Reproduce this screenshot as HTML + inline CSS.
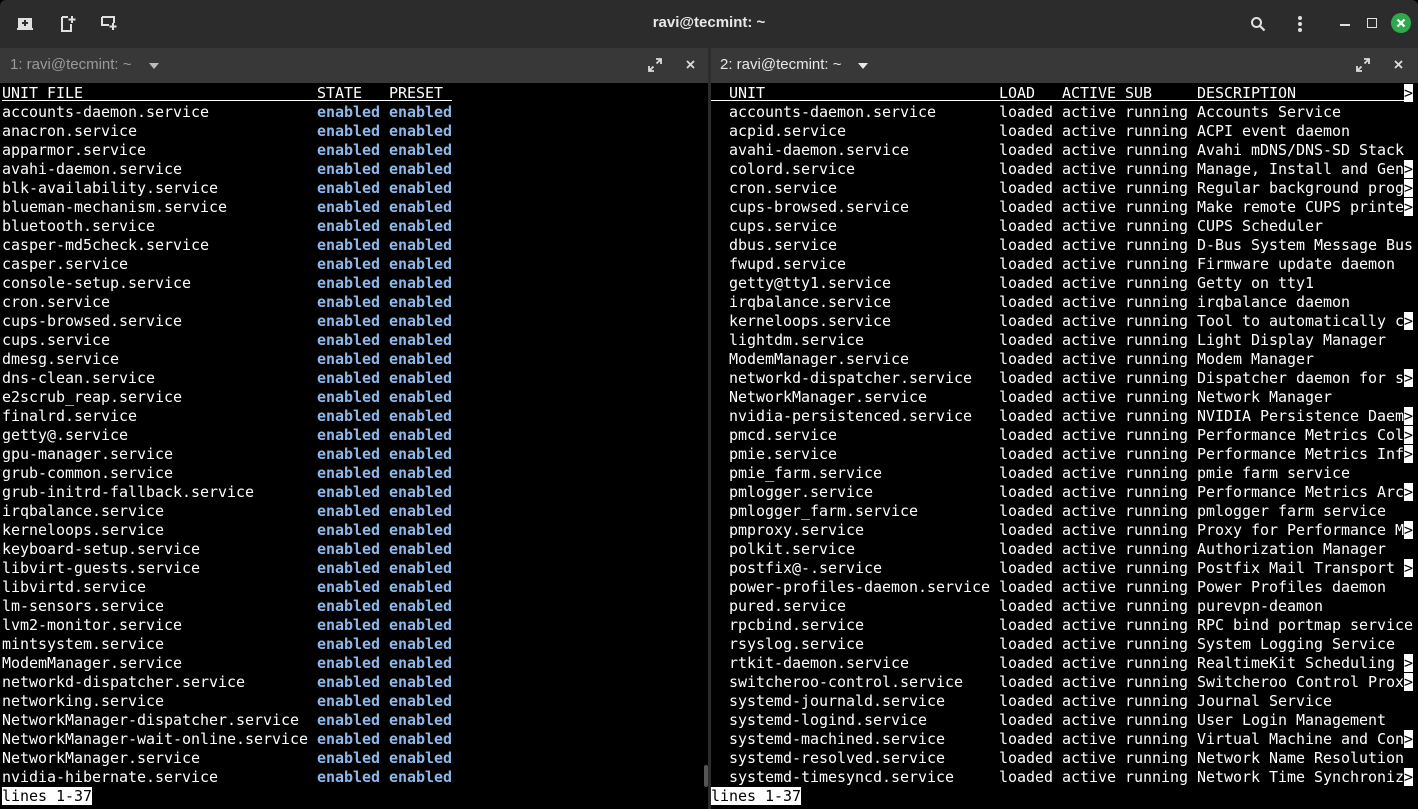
<!DOCTYPE html>
<html><head><meta charset="utf-8"><style>
*{margin:0;padding:0}
body{width:1418px;height:809px;background:#000;overflow:hidden;position:relative;font-family:"Liberation Sans",sans-serif}
.tb{position:absolute;left:0;top:0;width:1418px;height:48px;background:#2c2c2c;border-radius:6px 6px 0 0}
.title{position:absolute;left:0;width:1418px;top:14px;text-align:center;color:#e8e8e8;font-weight:bold;font-size:15px}
.tab{position:absolute;top:48px;height:35px;background:#383838}
.tabt{position:absolute;top:56px;font-size:15px}
pre{position:absolute;font-family:"DejaVu Sans Mono",monospace;font-size:15px;line-height:19px;color:#fff;white-space:pre;letter-spacing:-0.03px}
.b{color:#8fb8ea;font-weight:bold}
.g{background:#fff;color:#000}
.ul{position:absolute;height:1px;background:#fff;top:100px}
</style></head><body>
<div class="tb"></div>
<svg style="position:absolute;left:17px;top:16px" width="16" height="16" viewBox="0 0 16 16"><path d="M1 2h14v10H1z M0 12h16v2H0z" fill="#e0e0e0"/><path d="M8 4v6M5 7h6" stroke="#2c2c2c" stroke-width="2"/></svg>
<svg style="position:absolute;left:60px;top:15px" width="16" height="18" viewBox="0 0 16 18"><path d="M2 2h6M2 2v14h9V9" stroke="#e0e0e0" stroke-width="2" fill="none"/><path d="M12 1v7M8.5 4.5h7" stroke="#e0e0e0" stroke-width="2"/></svg>
<svg style="position:absolute;left:101px;top:16px" width="16" height="14" viewBox="0 0 16 14"><path d="M1 1h12v6M1 1v8h7" stroke="#e0e0e0" stroke-width="2" fill="none"/><path d="M12 7v7M8.5 10.5h7" stroke="#e0e0e0" stroke-width="2"/></svg>
<div class="title">ravi@tecmint: ~</div>
<svg style="position:absolute;left:1250px;top:16px" width="16" height="16" viewBox="0 0 16 16"><circle cx="6.5" cy="6.5" r="4.5" stroke="#e0e0e0" stroke-width="2" fill="none"/><path d="M10 10l4.5 4.5" stroke="#e0e0e0" stroke-width="2.2"/></svg>
<svg style="position:absolute;left:1297px;top:15px" width="6" height="18"><circle cx="3" cy="3" r="2" fill="#e0e0e0"/><circle cx="3" cy="9" r="2" fill="#e0e0e0"/><circle cx="3" cy="15" r="2" fill="#e0e0e0"/></svg>
<div style="position:absolute;left:1340px;top:24px;width:10px;height:2px;background:#e0e0e0"></div>
<div style="position:absolute;left:1367px;top:18px;width:8px;height:8px;border:1.5px solid #e0e0e0"></div>
<div style="position:absolute;left:1391px;top:13px;width:20px;height:20px;border-radius:50%;background:#2fa94e"></div>
<svg style="position:absolute;left:1396px;top:18px" width="10" height="10"><path d="M1.5 1.5l7 7M8.5 1.5l-7 7" stroke="#fff" stroke-width="2.2"/></svg>

<div class="tab" style="left:0;width:708px"></div>
<div class="tab" style="left:711px;width:707px"></div>
<div style="position:absolute;left:708px;top:48px;width:3px;height:761px;background:#2c2c2c"></div>
<div class="tabt" style="left:10px;color:#9a9a9a">1: ravi@tecmint: ~</div>
<div style="position:absolute;left:149px;top:63px;border:5px solid transparent;border-top:6px solid #bbb"></div>
<div class="tabt" style="left:720px;color:#e8e8e8">2: ravi@tecmint: ~</div>
<div style="position:absolute;left:858px;top:63px;border:5px solid transparent;border-top:6px solid #e8e8e8"></div>
<svg style="position:absolute;left:648px;top:58px" width="14" height="14"><path d="M8 1h5v5M13 1L8.5 5.5M6 13H1V8M1 13l4.5-4.5" stroke="#ddd" stroke-width="1.8" fill="none"/></svg>
<svg style="position:absolute;left:686px;top:60px" width="9" height="9"><path d="M1 1l7 7M8 1l-7 7" stroke="#ddd" stroke-width="1.8"/></svg>
<svg style="position:absolute;left:1356px;top:58px" width="14" height="14"><path d="M8 1h5v5M13 1L8.5 5.5M6 13H1V8M1 13l4.5-4.5" stroke="#ddd" stroke-width="1.8" fill="none"/></svg>
<svg style="position:absolute;left:1394px;top:60px" width="9" height="9"><path d="M1 1l7 7M8 1l-7 7" stroke="#ddd" stroke-width="1.8"/></svg>

<div class="ul" style="left:2px;width:450px"></div>
<div class="ul" style="left:711px;width:693px"></div>
<div style="position:absolute;left:704px;top:765px;width:4px;height:22px;background:#555;border-radius:2px"></div>

<pre style="left:2px;top:84px">UNIT FILE
accounts-daemon.service
anacron.service
apparmor.service
avahi-daemon.service
blk-availability.service
blueman-mechanism.service
bluetooth.service
casper-md5check.service
casper.service
console-setup.service
cron.service
cups-browsed.service
cups.service
dmesg.service
dns-clean.service
e2scrub_reap.service
finalrd.service
getty@.service
gpu-manager.service
grub-common.service
grub-initrd-fallback.service
irqbalance.service
kerneloops.service
keyboard-setup.service
libvirt-guests.service
libvirtd.service
lm-sensors.service
lvm2-monitor.service
mintsystem.service
ModemManager.service
networkd-dispatcher.service
networking.service
NetworkManager-dispatcher.service
NetworkManager-wait-online.service
NetworkManager.service
nvidia-hibernate.service
<span class="g">lines 1-37</span></pre>
<pre style="left:317px;top:84px">STATE   PRESET
<span class="b">enabled enabled
enabled enabled
enabled enabled
enabled enabled
enabled enabled
enabled enabled
enabled enabled
enabled enabled
enabled enabled
enabled enabled
enabled enabled
enabled enabled
enabled enabled
enabled enabled
enabled enabled
enabled enabled
enabled enabled
enabled enabled
enabled enabled
enabled enabled
enabled enabled
enabled enabled
enabled enabled
enabled enabled
enabled enabled
enabled enabled
enabled enabled
enabled enabled
enabled enabled
enabled enabled
enabled enabled
enabled enabled
enabled enabled
enabled enabled
enabled enabled
enabled enabled</span></pre>

<pre style="left:729px;top:84px">UNIT
accounts-daemon.service
acpid.service
avahi-daemon.service
colord.service
cron.service
cups-browsed.service
cups.service
dbus.service
fwupd.service
getty@tty1.service
irqbalance.service
kerneloops.service
lightdm.service
ModemManager.service
networkd-dispatcher.service
NetworkManager.service
nvidia-persistenced.service
pmcd.service
pmie.service
pmie_farm.service
pmlogger.service
pmlogger_farm.service
pmproxy.service
polkit.service
postfix@-.service
power-profiles-daemon.service
pured.service
rpcbind.service
rsyslog.service
rtkit-daemon.service
switcheroo-control.service
systemd-journald.service
systemd-logind.service
systemd-machined.service
systemd-resolved.service
systemd-timesyncd.service</pre>
<pre style="left:711px;top:787px"><span class="g">lines 1-37</span></pre>
<pre style="left:999px;top:84px">LOAD   ACTIVE SUB     DESCRIPTION            <span class="g">&gt;</span>
loaded active running Accounts Service
loaded active running ACPI event daemon
loaded active running Avahi mDNS/DNS-SD Stack
loaded active running Manage, Install and Gen<span class="g">&gt;</span>
loaded active running Regular background prog<span class="g">&gt;</span>
loaded active running Make remote CUPS printe<span class="g">&gt;</span>
loaded active running CUPS Scheduler
loaded active running D-Bus System Message Bus
loaded active running Firmware update daemon
loaded active running Getty on tty1
loaded active running irqbalance daemon
loaded active running Tool to automatically c<span class="g">&gt;</span>
loaded active running Light Display Manager
loaded active running Modem Manager
loaded active running Dispatcher daemon for s<span class="g">&gt;</span>
loaded active running Network Manager
loaded active running NVIDIA Persistence Daem<span class="g">&gt;</span>
loaded active running Performance Metrics Col<span class="g">&gt;</span>
loaded active running Performance Metrics Inf<span class="g">&gt;</span>
loaded active running pmie farm service
loaded active running Performance Metrics Arc<span class="g">&gt;</span>
loaded active running pmlogger farm service
loaded active running Proxy for Performance M<span class="g">&gt;</span>
loaded active running Authorization Manager
loaded active running Postfix Mail Transport <span class="g">&gt;</span>
loaded active running Power Profiles daemon
loaded active running purevpn-deamon
loaded active running RPC bind portmap service
loaded active running System Logging Service
loaded active running RealtimeKit Scheduling <span class="g">&gt;</span>
loaded active running Switcheroo Control Prox<span class="g">&gt;</span>
loaded active running Journal Service
loaded active running User Login Management
loaded active running Virtual Machine and Con<span class="g">&gt;</span>
loaded active running Network Name Resolution
loaded active running Network Time Synchroniz<span class="g">&gt;</span></pre>
</body></html>
